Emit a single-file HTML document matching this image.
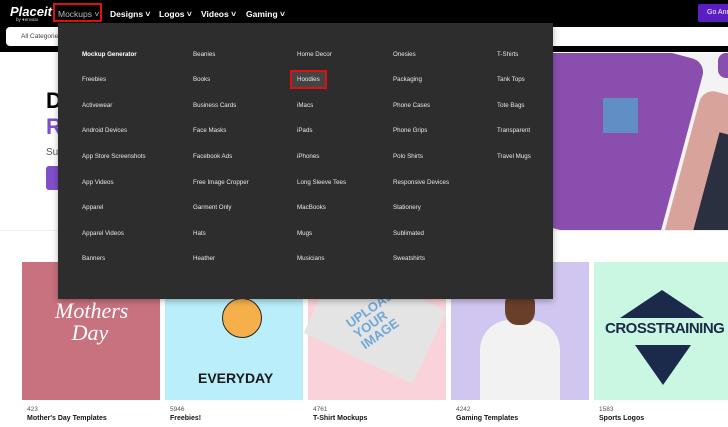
<!DOCTYPE html>
<html><head><meta charset="utf-8"><style>
*{margin:0;padding:0;box-sizing:border-box}
body{width:728px;height:427px;overflow:hidden;background:#fff;font-family:"Liberation Sans",sans-serif;position:relative}
.abs{position:absolute}
.nav{left:0;top:0;width:728px;height:52px;background:#000}
.navt{color:#fff;font-size:8.5px;font-weight:bold;top:9px}
.dd{left:58px;top:23px;width:495px;height:276px;background:#2d2d2d;box-shadow:0 2px 6px rgba(0,0,0,.3)}
.it{color:#e8e8e8;font-size:6.2px;position:absolute}
.card{top:262px;height:138px}
.num{top:406px;font-size:6.5px;color:#555}
.ttl{top:415px;font-size:7px;font-weight:bold;color:#111}
</style></head><body>
<div class="abs nav"></div>
<div class="abs" style="left:10px;top:4px;color:#fff;font-size:13px;font-weight:bold;font-style:italic">Placeit</div>
<div class="abs" style="left:16px;top:17px;color:#ccc;font-size:4.5px">by ●envato</div>
<div class="abs" style="left:53px;top:3px;width:49px;height:19px;border:2px solid #d11"></div>
<div class="abs navt" style="left:58px;color:#bbb;font-weight:normal">Mockups ˅</div>
<div class="abs navt" style="left:110px">Designs ˅</div>
<div class="abs navt" style="left:159px">Logos ˅</div>
<div class="abs navt" style="left:201px">Videos ˅</div>
<div class="abs navt" style="left:246px">Gaming ˅</div>
<div class="abs" style="left:698px;top:4px;width:40px;height:18px;background:#5b1ec2;border-radius:2px;color:#fff;font-size:7px;padding:5px 0 0 9px">Go Ann</div>
<div class="abs" style="left:6px;top:27px;width:722px;height:19px;background:#fff;border-radius:4px 0 0 4px"></div>
<div class="abs" style="left:21px;top:33px;font-size:6.5px;color:#444">All Categories</div>
<!-- hero -->
<div class="abs" style="left:46px;top:88px;font-size:22px;font-weight:bold;color:#000">D</div>
<div class="abs" style="left:46px;top:114px;font-size:22px;font-weight:bold;color:#7f4fc9">R</div>
<div class="abs" style="left:46px;top:147px;font-size:10px;color:#555">Su</div>
<div class="abs" style="left:46px;top:166px;width:30px;height:24px;background:#7f4fc9;border-radius:3px"></div>
<div class="abs" style="left:553px;top:53px;width:175px;height:177px;background:#f3f3f3;overflow:hidden">
 <div class="abs" style="left:-30px;top:-15px;width:160px;height:200px;background:#8a4fae;border-radius:14px;transform:rotate(15deg)"></div>
 <div class="abs" style="left:50px;top:45px;width:35px;height:35px;background:#5f8fc5"></div>
 <div class="abs" style="left:125px;top:45px;width:100px;height:180px;background:#d8a39b;border-radius:14px;transform:rotate(15deg)"></div>
 <div class="abs" style="left:150px;top:85px;width:60px;height:120px;background:#2b3040;transform:rotate(15deg)"></div>
 <div class="abs" style="left:165px;top:0px;width:30px;height:25px;background:#8a4fae;border-radius:8px"></div>
</div>
<div class="abs" style="left:0;top:230px;width:728px;height:1px;background:#eee"></div>
<!-- cards -->
<div class="abs card" style="left:22px;width:138px;background:#c8717f"></div>
<div class="abs" style="left:55px;top:300px;color:#fff;font-size:22px;font-style:italic;font-family:'Liberation Serif',serif;line-height:22px;text-align:center;width:70px">Mothers<br>Day</div>
<div class="abs card" style="left:165px;width:138px;background:#b9eefa"></div>
<div class="abs" style="left:222px;top:298px;width:40px;height:40px;border-radius:50%;background:#f5b04b;border:1px solid #222"></div>
<div class="abs" style="left:198px;top:370px;font-size:14px;font-weight:bold;color:#1a1a1a">EVERYDAY</div>
<div class="abs card" style="left:308px;width:138px;background:#fad3da"></div>
<div class="abs" style="left:315px;top:282px;width:120px;height:80px;background:#e4e4e4;transform:rotate(25deg)"></div>
<div class="abs" style="left:350px;top:300px;font-size:13px;font-weight:bold;color:#6fa8d8;transform:rotate(-35deg);line-height:13px">UPLOAD<br>YOUR<br>IMAGE</div>
<div class="abs card" style="left:451px;width:138px;background:#d1c6ef"></div>
<div class="abs" style="left:480px;top:320px;width:80px;height:80px;background:#f2f2f2;border-radius:30px 30px 0 0"></div>
<div class="abs" style="left:505px;top:290px;width:30px;height:35px;background:#6a3f2a;border-radius:40%"></div>
<div class="abs card" style="left:594px;width:134px;background:#c9f7e2"></div>
<div class="abs" style="left:605px;top:320px;font-size:15px;font-weight:bold;color:#1b2a4a;letter-spacing:-.5px">CROSSTRAINING</div>
<div class="abs" style="left:620px;top:290px;width:0;height:0;border-left:42px solid transparent;border-right:42px solid transparent;border-bottom:28px solid #1b2a4a"></div>
<div class="abs" style="left:635px;top:345px;width:0;height:0;border-left:28px solid transparent;border-right:28px solid transparent;border-top:40px solid #1b2a4a"></div>
<div class="abs num" style="left:27px">423</div><div class="abs ttl" style="left:27px">Mother's Day Templates</div>
<div class="abs num" style="left:170px">5946</div><div class="abs ttl" style="left:170px">Freebies!</div>
<div class="abs num" style="left:313px">4761</div><div class="abs ttl" style="left:313px">T-Shirt Mockups</div>
<div class="abs num" style="left:456px">4242</div><div class="abs ttl" style="left:456px">Gaming Templates</div>
<div class="abs num" style="left:599px">1583</div><div class="abs ttl" style="left:599px">Sports Logos</div>
<!-- dropdown -->
<div class="abs dd">
<div class="it" style="left:24px;top:28px;font-weight:bold;color:#fff">Mockup Generator</div>
<div class="it" style="left:24px;top:53px">Freebies</div>
<div class="it" style="left:24px;top:79px">Activewear</div>
<div class="it" style="left:24px;top:104px">Android Devices</div>
<div class="it" style="left:24px;top:130px">App Store Screenshots</div>
<div class="it" style="left:24px;top:156px">App Videos</div>
<div class="it" style="left:24px;top:181px">Apparel</div>
<div class="it" style="left:24px;top:207px">Apparel Videos</div>
<div class="it" style="left:24px;top:232px">Banners</div>
<div class="it" style="left:135px;top:28px">Beanies</div>
<div class="it" style="left:135px;top:53px">Books</div>
<div class="it" style="left:135px;top:79px">Business Cards</div>
<div class="it" style="left:135px;top:104px">Face Masks</div>
<div class="it" style="left:135px;top:130px">Facebook Ads</div>
<div class="it" style="left:135px;top:156px">Free Image Cropper</div>
<div class="it" style="left:135px;top:181px">Garment Only</div>
<div class="it" style="left:135px;top:207px">Hats</div>
<div class="it" style="left:135px;top:232px">Heather</div>
<div class="it" style="left:239px;top:28px">Home Decor</div>
<div class="abs" style="left:232px;top:47px;width:37px;height:19px;border:2px solid #d11;background:#444"></div>
<div class="it" style="left:239px;top:53px">Hoodies</div>
<div class="it" style="left:239px;top:79px">iMacs</div>
<div class="it" style="left:239px;top:104px">iPads</div>
<div class="it" style="left:239px;top:130px">iPhones</div>
<div class="it" style="left:239px;top:156px">Long Sleeve Tees</div>
<div class="it" style="left:239px;top:181px">MacBooks</div>
<div class="it" style="left:239px;top:207px">Mugs</div>
<div class="it" style="left:239px;top:232px">Musicians</div>
<div class="it" style="left:335px;top:28px">Onesies</div>
<div class="it" style="left:335px;top:53px">Packaging</div>
<div class="it" style="left:335px;top:79px">Phone Cases</div>
<div class="it" style="left:335px;top:104px">Phone Grips</div>
<div class="it" style="left:335px;top:130px">Polo Shirts</div>
<div class="it" style="left:335px;top:156px">Responsive Devices</div>
<div class="it" style="left:335px;top:181px">Stationery</div>
<div class="it" style="left:335px;top:207px">Sublimated</div>
<div class="it" style="left:335px;top:232px">Sweatshirts</div>
<div class="it" style="left:439px;top:28px">T-Shirts</div>
<div class="it" style="left:439px;top:53px">Tank Tops</div>
<div class="it" style="left:439px;top:79px">Tote Bags</div>
<div class="it" style="left:439px;top:104px">Transparent</div>
<div class="it" style="left:439px;top:130px">Travel Mugs</div>
</div>
</body></html>
